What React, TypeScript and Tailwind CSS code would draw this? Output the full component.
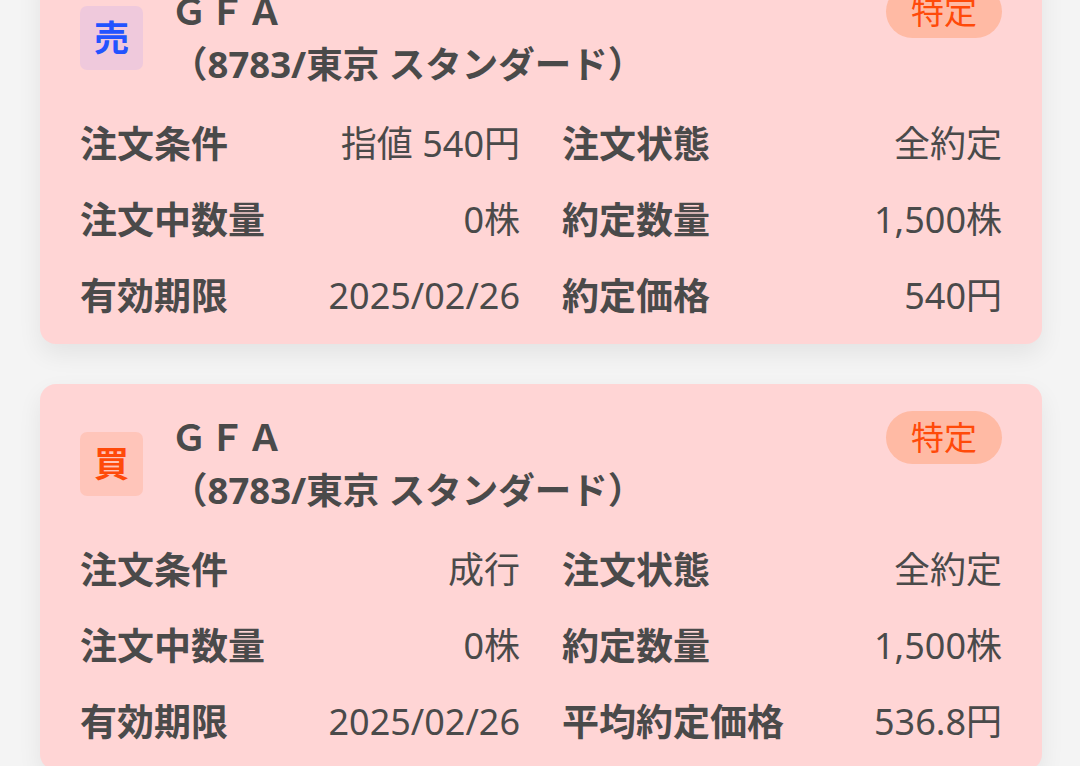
type Row = { label: string; value: string };

type Order = {
  side: "売" | "買";
  name: string;
  market: string;
  account: string;
  rows: Row[];
};

const orders: Order[] = [
  {
    side: "売",
    name: "ＧＦＡ",
    market: "（8783/東京 スタンダード）",
    account: "特定",
    rows: [
      { label: "注文条件", value: "指値 540円" },
      { label: "注文状態", value: "全約定" },
      { label: "注文中数量", value: "0株" },
      { label: "約定数量", value: "1,500株" },
      { label: "有効期限", value: "2025/02/26" },
      { label: "約定価格", value: "540円" },
    ],
  },
  {
    side: "買",
    name: "ＧＦＡ",
    market: "（8783/東京 スタンダード）",
    account: "特定",
    rows: [
      { label: "注文条件", value: "成行" },
      { label: "注文状態", value: "全約定" },
      { label: "注文中数量", value: "0株" },
      { label: "約定数量", value: "1,500株" },
      { label: "有効期限", value: "2025/02/26" },
      { label: "平均約定価格", value: "536.8円" },
    ],
  },
];

function OrderCard({ order }: { order: Order }) {
  const isSell = order.side === "売";
  return (
    <div className="rounded-[16px] bg-[#ffd5d5] px-[40px] pt-[28px] pb-[10px] shadow-[0_10px_24px_rgba(0,0,0,0.07)]">
      <div className="flex items-start">
        <div className="flex flex-1 items-center">
          <div
            className={
              isSell
                ? "flex h-[64px] w-[63px] items-center justify-center rounded-[7px] bg-[#efc9dc] text-[35px] font-bold text-[#2253ff]"
                : "flex h-[64px] w-[63px] items-center justify-center rounded-[7px] bg-[#ffc5ba] text-[35px] font-bold text-[#ff4a0a]"
            }
          >
            {order.side}
          </div>
          <div className="ml-[28px] flex flex-col">
            <div className="h-[52px] text-[36px] leading-[52px] font-bold tracking-[2px]">
              {order.name}
            </div>
            <div className="h-[52px] text-[36.5px] leading-[52px] font-bold">
              {order.market}
            </div>
          </div>
        </div>
        <div className="mt-[-1px] flex h-[53px] items-center rounded-full bg-[#ffbaa4] px-[25px] text-[33px] text-[#ff4a0a]">
          {order.account}
        </div>
      </div>
      <div className="mt-[16px] grid grid-cols-2 gap-x-[42px]">
        {order.rows.map((r) => (
          <div key={r.label} className="flex h-[76px] items-center justify-between">
            <span className="text-[37px] font-bold">{r.label}</span>
            <span className="text-[36px]">{r.value}</span>
          </div>
        ))}
      </div>
    </div>
  );
}

export default function App() {
  return (
    <main
      className="h-[766px] overflow-hidden bg-[#f4f4f4] text-[#4a4a4a]"
      style={{ fontFamily: '"Noto Sans", "Noto Sans CJK JP", sans-serif' }}
    >
      <div className="mt-[-42px] flex flex-col gap-[40px] px-[40px] pr-[38px]">
        {orders.map((o, i) => (
          <OrderCard key={i} order={o} />
        ))}
      </div>
    </main>
  );
}
